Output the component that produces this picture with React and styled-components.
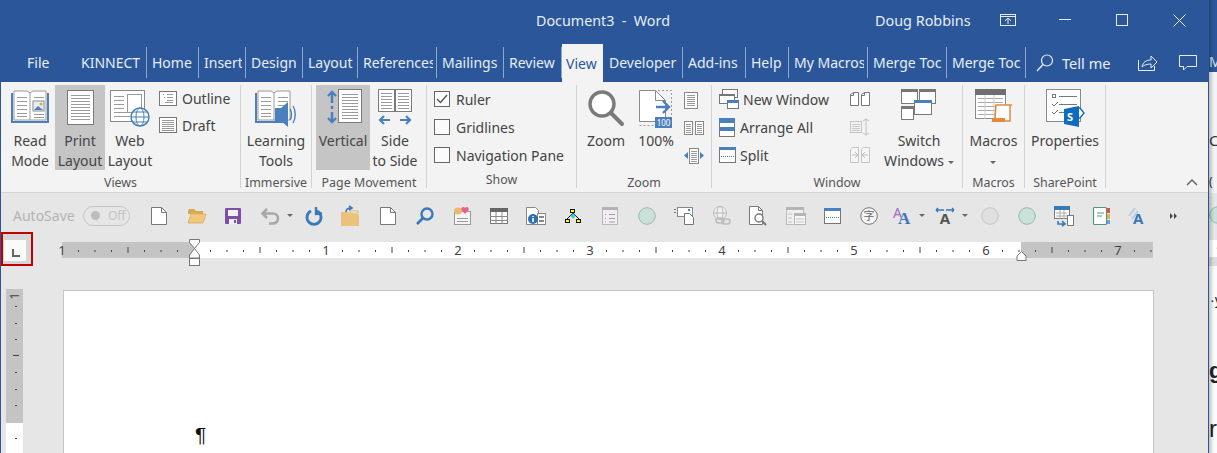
import React from 'react';
import styled, { createGlobalStyle } from 'styled-components';

const Global = createGlobalStyle`
  html, body { margin: 0; padding: 0; background: #e6e6e6; overflow: hidden; }
  * { box-sizing: border-box; }
`;

const Page = styled.div`
  display: flex;
  width: 1217px;
  height: 453px;
  overflow: hidden;
  font-family: "Noto Sans", "Open Sans", sans-serif;
  color: #444;
`;

const Frame = styled.div`
  width: 1209px;
  flex: none;
  display: flex;
  flex-direction: column;
  border-left: 1px solid #2b579a;
  border-right: 1px solid #2b579a;
`;

const Behind = styled.div`
  flex: 1;
  display: flex;
  flex-direction: column;
  overflow: hidden;
  position: relative;
  &::after {
    content: '';
    position: absolute;
    left: 0;
    top: 0;
    bottom: 0;
    width: 5px;
    background: linear-gradient(to right, rgba(0, 0, 0, 0.22), rgba(0, 0, 0, 0));
  }
`;

const BehindBlue = styled.div`
  height: 72px;
  flex: none;
  background: #2b579a;
  color: #dfe6f1;
  padding-top: 52px;
  font-size: 14px;
  line-height: 20px;
`;

const BehindRibbon = styled.div`
  height: 121px;
  flex: none;
  background: #f3f3f3;
  color: #333;
  font-size: 15px;
  line-height: 20px;
  padding-top: 58px;
`;

const BehindParen = styled.div`
  margin-top: 22px;
  font-size: 12px;
`;

const BehindQat = styled.div`
  height: 47px;
  flex: none;
  background: #e6e6e6;
  padding-top: 13px;
  line-height: 0;
`;

const BehindRuler = styled.div`
  height: 17px;
  flex: none;
  background: #fff;
  font-size: 12px;
  line-height: 17px;
  padding-left: 7px;
`;

const BehindBand = styled.div`
  height: 9px;
  flex: none;
  background: #dcdcdc;
`;

const BehindDoc = styled.div`
  flex: 1;
  background: #fbfbfb;
  color: #222;
  padding-top: 26px;
`;

const BehindLine = styled.div`
  font-family: "Liberation Sans", sans-serif;
  font-size: ${p => p.$size}px;
  font-weight: ${p => (p.$bold ? 700 : 400)};
  line-height: ${p => p.$lh}px;
  padding-left: ${p => p.$pl || 0}px;
  margin-top: ${p => p.$mt || 0}px;
  white-space: nowrap;
`;

const TitleBar = styled.div`
  height: 40px;
  background: #2b579a;
  color: #e8edf5;
  display: flex;
  align-items: center;
  font-size: 14px;
`;

const DocTitle = styled.div`
  margin-left: 535px;
  width: 339px;
  font-size: 14.3px;
`;

const UserName = styled.div`
  width: 125px;
  white-space: nowrap;
  font-size: 14.4px;
`;

const WinButton = styled.div`
  display: flex;
  justify-content: center;
  width: ${p => p.$w}px;
  margin-left: ${p => p.$ml || 0}px;
`;

const TabBar = styled.div`
  height: 42px;
  background: #2b579a;
  display: flex;
  align-items: flex-end;
`;

const Tab = styled.div`
  width: ${p => p.$w}px;
  height: ${p => (p.$active ? 38 : 31)}px;
  flex: none;
  margin-bottom: ${p => (p.$active ? 0 : 4)}px;
  display: flex;
  align-items: center;
  white-space: nowrap;
  padding-left: ${p => (p.$active ? 4 : p.$pad ?? 5)}px;
  font-size: 14px;
  color: ${p => (p.$active ? '#2b579a' : '#e8edf5')};
  background: ${p => (p.$active ? '#f3f3f3' : 'transparent')};
  border-right: ${p => (p.$sep ? '1px solid #8fa8cc' : 'none')};
  padding-top: ${p => (p.$active ? 1 : 0)}px;
  margin-right: ${p => p.$mr || 0}px;
`;

const TabLabel = styled.span`
  overflow: hidden;
  flex: 1;
  margin-right: 3px;
`;

const TabIcon = styled.div`
  display: flex;
  align-items: center;
  flex: none;
  height: 31px;
  margin-bottom: 4px;
  margin-left: ${p => p.$ml}px;
`;

const TellMe = styled.div`
  display: flex;
  align-items: center;
  gap: 8px;
  height: 31px;
  margin: 0 0 4px 10px;
  width: 96px;
  flex: none;
  font-size: 14.6px;
  color: #e8edf5;
`;

const Ribbon = styled.div`
  height: 111px;
  background: #f3f3f3;
  display: flex;
  position: relative;
  border-bottom: 1px solid #d4d4d4;
`;

const Group = styled.div`
  width: ${p => p.$w}px;
  flex: none;
  display: flex;
  flex-direction: column;
  padding-top: 3px;
  margin: 3px 0 4px;
  border-right: 1px solid #d2d2d2;
`;

const GroupBody = styled.div`
  height: 85px;
  margin-top: -3px;
  display: flex;
  padding-left: ${p => p.$pl || 0}px;
`;

const GroupLabel = styled.div`
  text-align: center;
  font-size: 12.4px;
  line-height: 16px;
  margin-top: 5px;
  color: #555;
  white-space: nowrap;
`;

const BigButton = styled.div`
  width: ${p => p.$w}px;
  height: 85px;
  flex: none;
  display: flex;
  flex-direction: column;
  align-items: center;
  background: ${p => (p.$on ? '#c5c5c5' : 'transparent')};
  margin-left: ${p => p.$ml || 0}px;
`;

const BigIcon = styled.div`
  height: 46px;
  padding-top: 4px;
  display: flex;
  justify-content: center;
  flex: none;
`;

const BigText = styled.div`
  font-size: 14px;
  line-height: 20px;
  text-align: center;
  white-space: nowrap;
  color: #444;
`;

const Caret = styled.span`
  display: inline-block;
  width: 0;
  height: 0;
  border-left: 3px solid transparent;
  border-right: 3px solid transparent;
  border-top: 3px solid #666;
  margin-left: ${p => p.$ml ?? 4}px;
  vertical-align: middle;
`;

const SmallCol = styled.div`
  display: flex;
  flex-direction: column;
  gap: ${p => p.$gap ?? 4}px;
  padding-top: ${p => p.$pt ?? 3}px;
  margin-left: ${p => p.$ml || 0}px;
  width: ${p => (p.$w ? `${p.$w}px` : 'auto')};
  flex: none;
`;

const SmallRow = styled.div`
  display: flex;
  align-items: center;
  gap: ${p => p.$gap ?? 5}px;
  height: 24px;
  font-size: 14px;
  white-space: nowrap;
  color: #444;
`;

const CheckBox = styled.div`
  width: 16px;
  height: 16px;
  border: 1px solid #666;
  background: #fbfbfb;
  display: flex;
  align-items: center;
  justify-content: center;
`;

const Chevron = styled.div`
  position: absolute;
  left: 1185px;
  top: 97px;
  line-height: 0;
`;

const Qat = styled.div`
  height: 45px;
  background: #e6e6e6;
  display: flex;
  align-items: center;
  padding-left: 12px;
`;

const AutoSave = styled.div`
  font-size: 14px;
  color: #b4b4b4;
  width: 70px;
  flex: none;
`;

const Toggle = styled.div`
  width: 47px;
  height: 20px;
  border: 1px solid #c6c6c6;
  border-radius: 10px;
  display: flex;
  align-items: center;
  padding-left: 7px;
  gap: 8px;
  font-size: 12px;
  color: #c4c4c4;
  flex: none;
`;

const ToggleDot = styled.span`
  width: 9px;
  height: 9px;
  border-radius: 50%;
  background: #bdbdbd;
`;

const QatSlot = styled.div`
  width: 20px;
  margin-left: ${p => p.$ml}px;
  flex: none;
  display: flex;
  justify-content: center;
  align-items: center;
  line-height: 0;
`;

const RulerRow = styled.div`
  height: 50px;
  background: #e6e6e6;
  display: flex;
  align-items: flex-start;
  margin-top: -6px;
  flex: none;
`;

const TabStop = styled.div`
  width: 32px;
  height: 34px;
  border: 2px solid #c00000;
  flex: none;
  padding: 6px 5px 3px 1px;
  display: flex;
  background: #d6d6d6;
`;

const TabStopInner = styled.div`
  flex: 1;
  background: #fafafa;
  display: flex;
  align-items: flex-end;
  padding: 0 0 4px 8px;
`;

const HRuler = styled.div`
  margin: 10px 0 0 29px;
  width: 1091px;
  height: 16px;
  display: flex;
  position: relative;
`;

const Seg = styled.div`
  width: ${p => p.$w}px;
  background: ${p => (p.$gray ? '#c4c4c4' : '#fff')};
  flex: none;
`;

const RulerArt = styled.svg`
  position: absolute;
  left: 0;
  top: -6px;
  overflow: visible;
`;

const Workspace = styled.div`
  flex: 1;
  background: #e6e6e6;
  display: flex;
  min-height: 0;
  overflow: hidden;
  padding-top: 7px;
`;

const VRuler = styled.div`
  width: 17px;
  margin-left: 5px;
  flex: none;
  display: flex;
  flex-direction: column;
  position: relative;
`;

const VSeg = styled.div`
  height: ${p => p.$h}px;
  flex: ${p => (p.$grow ? 1 : 'none')};
  background: ${p => (p.$gray ? '#c4c4c4' : '#fff')};
`;

const VRulerArt = styled.svg`
  position: absolute;
  left: 0;
  top: 0;
`;

const PageSheet = styled.div`
  width: 1091px;
  margin: 1px 0 0 40px;
  height: 200px;
  flex: none;
  background: #fff;
  border: 1px solid #c4c4c4;
  padding: 132px 0 0 131px;
`;

const Pilcrow = styled.div`
  font-family: "Liberation Sans", sans-serif;
  font-size: 21px;
  line-height: 24px;
  color: #111;
`;

const IconSvg = styled.svg`
  flex: none;
  overflow: visible;
`;

const Svg = ({ w, h, children }) => (
  <IconSvg width={w} height={h} viewBox={`0 0 ${w} ${h}`} fill="none">{children}</IconSvg>
);

const lines = (x1, x2, ys, c = '#9a9a9a') =>
  ys.map(y => <path key={`${x1}-${y}`} d={`M${x1} ${y}.5H${x2}`} stroke={c} />);

const ReadIcon = () => (
  <Svg w={38} h={36}>
    <path d="M1 4v29h36V4" stroke="#4a80bd" strokeWidth="2" />
    <path d="M3 2l13 0 3 2 3-2 13 0v29H3z" fill="#fff" stroke="#9a9a9a" />
    <path d="M19 4v27" stroke="#9a9a9a" />
    {lines(6, 16, [8, 12, 16, 20, 24, 27])}
    {lines(23, 33, [8, 25, 28])}
    <rect x="22" y="12" width="11" height="10" fill="#e8eef6" stroke="#8a8a8a" />
    <circle cx="30" cy="15" r="1.5" fill="#e8a33c" />
    <path d="M23 21l4-4 5 4z" fill="#4a80bd" />
  </Svg>
);

const PageIcon = () => (
  <Svg w={30} h={38}>
    <rect x="2.5" y="1.5" width="26" height="34" fill="#fff" stroke="#7a7a7a" />
    {lines(6, 25, [6, 9, 12, 15, 18, 21, 24, 27, 30])}
  </Svg>
);

const WebIcon = () => (
  <Svg w={42} h={38}>
    <rect x="1.5" y="1.5" width="34" height="31" fill="#fff" stroke="#8a8a8a" />
    <rect x="18.5" y="5.5" width="14" height="18" fill="#fff" stroke="#9a9a9a" />
    {lines(5, 15, [7, 11, 15, 19])}
    {lines(5, 21, [23, 27])}
    <circle cx="31" cy="28" r="9" fill="#fff" stroke="#4a80bd" strokeWidth="1.5" />
    <ellipse cx="31" cy="28" rx="4" ry="9" stroke="#4a80bd" />
    <path d="M22 28h18M24 23h14M24 33h14" stroke="#4a80bd" />
  </Svg>
);

const OutlineIcon = () => (
  <Svg w={18} h={15}>
    <rect x="0.5" y="0.5" width="17" height="14" fill="#fff" stroke="#777" />
    <path d="M4 3.5h1M5 6.5h1M8 3.5h6M8 6.5h6M8 9.5h6M6 11.5h8" stroke="#999" />
  </Svg>
);

const DraftIcon = () => (
  <Svg w={18} h={16}>
    <rect x="0.5" y="0.5" width="17" height="15" fill="#fff" stroke="#777" />
    {lines(3, 15, [3, 5, 7, 9, 11, 13], '#999')}
  </Svg>
);

const LearnIcon = () => (
  <Svg w={42} h={38}>
    <path d="M1 4v29h28" stroke="#4a80bd" strokeWidth="2" />
    <path d="M3 2l13 0 3 2 3-2 13 0v29H3z" fill="#fff" stroke="#9a9a9a" />
    <path d="M19 4v27" stroke="#9a9a9a" />
    {lines(6, 16, [8, 12, 16, 20, 24, 27])}
    {lines(23, 33, [8, 12, 16])}
    <path d="M20 19h6l7-6v25l-7-6h-6z" fill="#4a80bd" />
    <path d="M35 20c2 3 2 8 0 11M38 17c3 5 3 12 0 17" stroke="#4a80bd" strokeWidth="1.4" />
  </Svg>
);

const VerticalIcon = () => (
  <Svg w={38} h={36}>
    <path d="M8 3v11M8 17v3M8 23v10M4 7l4-4 4 4M4 29l4 4 4-4" stroke="#4a80bd" strokeWidth="2.4" />
    <rect x="14.5" y="0.5" width="23" height="33" fill="#fff" stroke="#7a7a7a" />
    {lines(18, 34, [5, 8, 11, 14, 17, 20, 23, 26, 29], '#9a9a9a')}
  </Svg>
);

const SideIcon = () => (
  <Svg w={36} h={36}>
    <rect x="1.5" y="0.5" width="16" height="22" fill="#fff" stroke="#7a7a7a" />
    <rect x="18.5" y="0.5" width="16" height="22" fill="#fff" stroke="#7a7a7a" />
    {lines(4, 15, [4, 7, 10, 13, 16, 19])}
    {lines(21, 32, [4, 7, 10, 13, 16, 19])}
    <path d="M3 31h10M7 27l-4 4 4 4M23 31h10M29 27l4 4-4 4" stroke="#4a80bd" strokeWidth="2.2" />
  </Svg>
);

const ZoomIcon = () => (
  <Svg w={38} h={38}>
    <circle cx="15" cy="15" r="12" stroke="#7a7a7a" strokeWidth="3.4" fill="#fff" />
    <path d="M24 24l11 11" stroke="#7a7a7a" strokeWidth="4" strokeLinecap="round" />
  </Svg>
);

const Zoom100Icon = () => (
  <Svg w={36} h={40}>
    <path d="M1.5 1.5h16l10 10v21h-26z" fill="#fff" stroke="#8a8a8a" />
    <path d="M17.5 1.5v10h10" stroke="#8a8a8a" />
    <path d="M20 1.5h13.5v30M1.5 36.5h16" stroke="#9a9a9a" strokeDasharray="2 2" />
    <path d="M18 18h13M25 12l6 6-6 6" stroke="#4a80bd" strokeWidth="2.4" />
    <rect x="17" y="28" width="17" height="11" fill="#4a80bd" />
    <text x="25.5" y="37" fontSize="8" fontFamily="Noto Sans" fill="#fff" textAnchor="middle">100</text>
  </Svg>
);

const OnePage = () => (
  <Svg w={14} h={17}>
    <rect x="0.5" y="0.5" width="13" height="16" fill="#fff" stroke="#888" />
    {lines(3, 11, [3, 5, 7, 9, 11, 13])}
  </Svg>
);

const TwoPage = () => (
  <Svg w={20} h={14}>
    <rect x="0.5" y="0.5" width="8" height="13" fill="#fff" stroke="#888" />
    <rect x="11.5" y="0.5" width="8" height="13" fill="#fff" stroke="#888" />
    {lines(2, 7, [3, 5, 7, 9, 11])}
    {lines(13, 18, [3, 5, 7, 9, 11])}
  </Svg>
);

const WidthPage = () => (
  <Svg w={20} h={16}>
    <rect x="5.5" y="0.5" width="9" height="15" fill="#fff" stroke="#888" />
    {lines(7, 13, [3, 5, 7, 9, 11, 13])}
    <path d="M4 4v7L0 7.5zM16 4v7l4-3.5z" fill="#4a80bd" />
  </Svg>
);

const NewWindowIcon = () => (
  <Svg w={20} h={20}>
    <rect x="3.5" y="0.5" width="15" height="8" fill="#fff" stroke="#777" />
    <rect x="0.5" y="5.5" width="15" height="9" fill="#fff" stroke="#777" />
    <rect x="0" y="5" width="16" height="2" fill="#777" />
    <rect x="8.5" y="11.5" width="11" height="8" fill="#fff" stroke="#777" />
    <rect x="8" y="11" width="12" height="3" fill="#4a80bd" />
  </Svg>
);

const ArrangeIcon = () => (
  <Svg w={16} h={19}>
    <rect x="0.5" y="0.5" width="15" height="18" fill="#fff" stroke="#777" />
    <rect x="0" y="0" width="16" height="5" fill="#4a80bd" />
    <rect x="0" y="9" width="16" height="4" fill="#4a80bd" />
  </Svg>
);

const SplitIcon = () => (
  <Svg w={17} h={16}>
    <rect x="0.5" y="0.5" width="16" height="15" fill="#fff" stroke="#777" />
    <rect x="0" y="0" width="17" height="3" fill="#4a80bd" />
    <path d="M2 9.5h13" stroke="#4a80bd" strokeDasharray="1 1" />
  </Svg>
);

const SyncA = () => (
  <Svg w={20} h={14}>
    <path d="M.5 2.5l3-2h5v13h-8zM11.5 2.5l3-2h5v13h-8z" fill="#fff" stroke="#777" />
    <path d="M3.5.5v3h-3M14.500.5v3h-3" stroke="#777" />
  </Svg>
);

const SyncB = () => (
  <Svg w={20} h={18}>
    <rect x="0.5" y="3.5" width="11" height="11" fill="#f3f3f3" stroke="#c4c4c4" />
    {lines(2, 10, [6, 8, 10, 12], '#c8c8c8')}
    <path d="M16 1v16M13 3l3-2 3 2M13 15l3 2 3-2" stroke="#c0c0c0" />
  </Svg>
);

const SyncC = () => (
  <Svg w={20} h={16}>
    <path d="M.5 2.5l2-2h6v15h-8zM11.5 2.5l2-2h6v15h-8z" fill="#f6f6f6" stroke="#c4c4c4" />
    <path d="M2 8h5M5 5l3 3-3 3M18 8h-5M15 5l-3 3 3 3" stroke="#bcbcbc" />
  </Svg>
);

const SwitchIcon = () => (
  <Svg w={36} h={32}>
    <rect x="0.5" y="0.5" width="16" height="14" fill="#fff" stroke="#7a7a7a" />
    <rect x="18.5" y="0.5" width="16" height="14" fill="#fff" stroke="#7a7a7a" />
    <rect x="0.5" y="17.5" width="12" height="13" fill="#fff" stroke="#7a7a7a" />
    <rect x="0" y="0" width="17" height="3" fill="#777" />
    <rect x="18" y="0" width="17" height="3" fill="#777" />
    <rect x="0" y="17" width="13" height="3" fill="#777" />
    <rect x="13.5" y="11.5" width="17" height="14" fill="#fff" stroke="#7a7a7a" />
    <rect x="13" y="11" width="18" height="3" fill="#4a80bd" />
  </Svg>
);

const MacrosIcon = () => (
  <Svg w={38} h={34}>
    <rect x="0.5" y="0.5" width="30" height="29" fill="#fff" stroke="#8a8a8a" />
    <rect x="0" y="0" width="31" height="6" fill="#6f6f6f" />
    {lines(3, 28, [9, 13, 17, 21, 25], '#aaa')}
    <path d="M10 6v24M19 6v24" stroke="#ccc" />
    <path d="M21 16h15l-1 2v14H18l2-2z" fill="#fff" stroke="#e08a3c" strokeWidth="1.5" />
    <rect x="17" y="29" width="13" height="4" fill="#e08a3c" />
  </Svg>
);

const PropsIcon = () => (
  <Svg w={38} h={38}>
    <rect x="0.5" y="0.5" width="34" height="32" fill="#fff" stroke="#8a8a8a" />
    <rect x="6.5" y="5.5" width="3" height="3" stroke="#777" />
    <path d="M13 7.5h18M13 15.5h18M13 23.5h5M6 15l2 2 4-4M6 23l2 2 4-4" stroke="#777" />
    <path d="M32 19h2l4 5-4 5h-2" stroke="#0f6cbd" fill="#fff" strokeWidth="1.4" />
    <path d="M18 20l15-3v21l-15-3z" fill="#0f6cbd" />
    <text x="21" y="32" fontSize="11" fontWeight="700" fontFamily="Noto Sans" fill="#fff">S</text>
  </Svg>
);

const Qdoc = () => (
  <Svg w={16} h={18}>
    <path d="M.5.5h10l5 5v12H.5z" fill="#fff" stroke="#777" />
    <path d="M10.500.5v5h5" stroke="#777" />
  </Svg>
);

const Qopen = () => (
  <Svg w={19} h={15}>
    <path d="M1 3l1-2h5l2 2h7v3H1z" fill="#d9a94f" />
    <path d="M4 6h15l-3 9H1z" fill="#f0c77f" stroke="#dfb369" />
  </Svg>
);

const Qsave = () => (
  <Svg w={16} h={16}>
    <rect width="16" height="16" rx="1" fill="#7d4fa6" />
    <rect x="3" y="2" width="10" height="6" fill="#f0f0f0" />
    <rect x="4" y="11" width="8" height="5" fill="#f0f0f0" />
    <rect x="9" y="12" width="2" height="3" fill="#7d4fa6" />
  </Svg>
);

const Qundo = () => (
  <Svg w={19} h={16}>
    <path d="M6 1L1.500 5.500 6 10M2 5.500h10a5 5 0 0 1 0 10H8" stroke="#a8a8a8" strokeWidth="2.6" />
  </Svg>
);

const Qredo = () => (
  <Svg w={18} h={18}>
    <path d="M6 4a7 7 0 1 0 6 0" stroke="#3b78b8" strokeWidth="2.8" />
    <path d="M11 0v7l6-.5" stroke="#3b78b8" strokeWidth="2.4" />
  </Svg>
);

const Qfolder = () => (
  <Svg w={20} h={20}>
    <path d="M1 6h7l2 2h9v12H1z" fill="#eac27c" />
    <path d="M10 7h8V5h-8z" fill="#fff" stroke="#d8b067" />
    <path d="M6 6c0-3 2-4 5-4M9 0l3 2-3 2" stroke="#3b78b8" strokeWidth="1.6" />
  </Svg>
);

const Qmag = () => (
  <Svg w={18} h={18}>
    <circle cx="11" cy="7" r="5.5" stroke="#3b78b8" strokeWidth="2.4" />
    <path d="M7 11l-6 6" stroke="#3b78b8" strokeWidth="2.6" />
  </Svg>
);

const Qlabels = () => (
  <Svg w={18} h={18}>
    <rect x="1.5" y="4.5" width="16" height="13" fill="#f4f4f4" stroke="#999" />
    {lines(4, 15, [11, 14])}
    <ellipse cx="5" cy="4" rx="4" ry="3.500" fill="#e8b96b" />
    <path d="M12 7L8.500 3a2 2 0 0 1 3.500-2 2 2 0 0 1 3.500 2z" fill="#e9618a" />
  </Svg>
);

const Qtable = () => (
  <Svg w={18} h={16}>
    <rect x="0.5" y="0.5" width="17" height="15" fill="#fff" stroke="#777" />
    <rect width="18" height="4" fill="#666" />
    <path d="M6 4v12M12 4v12M0 8.500h18M0 12.500h18" stroke="#888" />
  </Svg>
);

const Qinfo = () => (
  <Svg w={20} h={18}>
    <path d="M.5.5h9l3 3v14H.5z" fill="#fff" stroke="#888" />
    <rect x="11.5" y="6.5" width="8" height="11" fill="#fff" stroke="#888" />
    <path d="M13 10h5M13 14h5" stroke="#888" strokeWidth="2" />
    <circle cx="7" cy="12" r="5" fill="#2f6fb3" />
    <path d="M7 11v4M7 9v1" stroke="#fff" strokeWidth="1.6" />
  </Svg>
);

const Qorg = () => (
  <Svg w={16} h={14}>
    <path d="M8 4L2 10M8 4l6 6" stroke="#111" />
    <rect x="5.5" y="0.5" width="4" height="3" fill="#ff0" stroke="#111" />
    <rect x="0.5" y="10.5" width="4" height="3" fill="#ff0" stroke="#111" />
    <rect x="11.5" y="10.5" width="4" height="3" fill="#ff0" stroke="#111" />
    <rect x="6" y="5" width="4" height="4" fill="#39c9d6" transform="rotate(45 8 7)" />
  </Svg>
);

const Qform = () => (
  <Svg w={16} h={18}>
    <rect x="0.5" y="0.5" width="15" height="17" fill="#f0eef0" stroke="#bcb4bc" />
    <rect width="16" height="3" fill="#b8b0b8" />
    <path d="M3 7.500h1M3 11.500h1M3 15h1M7 7.500h6M7 11.500h6M7 15h6" stroke="#a89ca8" />
  </Svg>
);

const Qcircle = ({ fill = '#cbe0d8', stroke = '#8fbfa9' }) => (
  <Svg w={18} h={18}>
    <circle cx="9" cy="9" r="8.3" fill={fill} stroke={stroke} />
  </Svg>
);

const Qmail = () => (
  <Svg w={20} h={18}>
    <path d="M0 2.500h2M0 5.500h2" stroke="#777" />
    <rect x="3.5" y="0.5" width="15" height="9" fill="#fff" stroke="#888" />
    <rect x="14" y="2" width="2" height="2" fill="#4a80bd" />
    <path d="M10.500 6.500h5l4 4v7h-9z" fill="#fff" stroke="#777" />
  </Svg>
);

const Qweb = () => (
  <Svg w={19} h={19}>
    <circle cx="8" cy="7" r="6.5" stroke="#bcbcbc" fill="#efefef" />
    <ellipse cx="8" cy="7" rx="3" ry="6.5" stroke="#bcbcbc" />
    <path d="M1 7h14" stroke="#bcbcbc" />
    <rect x="4" y="12" width="8" height="5" rx="2.5" stroke="#bcbcbc" strokeWidth="1.6" />
    <rect x="10" y="13" width="8" height="5" rx="2.5" stroke="#bcbcbc" strokeWidth="1.6" />
  </Svg>
);

const Qpreview = () => (
  <Svg w={18} h={20}>
    <path d="M.5.5h9l4 4v14h-13z" fill="#fff" stroke="#777" />
    <path d="M9.500.5v4h4" stroke="#777" />
    <circle cx="10" cy="12" r="4" fill="#fff" stroke="#777" strokeWidth="1.4" />
    <path d="M13 15l4 4" stroke="#777" strokeWidth="2" />
  </Svg>
);

const Qgrid = () => (
  <Svg w={20} h={18}>
    <rect x="0.5" y="0.5" width="17" height="17" fill="#f0f0f0" stroke="#bcbcbc" />
    <rect width="18" height="3" fill="#b4b4b4" />
    <rect x="8.5" y="6.5" width="11" height="11" fill="#f6f6f6" stroke="#b4b4b4" />
    <rect x="8" y="6" width="12" height="3" fill="#b4b4b4" />
    <path d="M2 7h4M2 11h4M2 15h4M10 12h8M10 15h8" stroke="#c4c4c4" />
  </Svg>
);

const Qchar = () => (
  <Svg w={18} h={18}>
    <circle cx="9" cy="9" r="8.3" fill="#f4f4f4" stroke="#777" />
    <text x="9" y="13" fontSize="11" textAnchor="middle" fill="#666" fontFamily="Noto Sans CJK SC">字</text>
  </Svg>
);

const QfontA = () => (
  <Svg w={18} h={17}>
    <text x="0" y="11" fontSize="14" fontFamily="Noto Sans" fill="#a06fc4">A</text>
    <text x="5" y="17" fontSize="17" fontWeight="700" fontFamily="Liberation Serif" fill="#3b78b8">A</text>
  </Svg>
);

const QspaceA = () => (
  <Svg w={20} h={17}>
    <path d="M1 3h8M1 3l2-2M1 3l2 2M19 3h-8M19 3l-2-2M19 3l-2 2" stroke="#3b78b8" strokeWidth="1.4" />
    <text x="10" y="17" fontSize="15" fontWeight="700" textAnchor="middle" fontFamily="Noto Sans" fill="#555">A</text>
  </Svg>
);

const Qsync = () => (
  <Svg w={20} h={20}>
    <rect x="0.5" y="0.5" width="15" height="12" fill="#fff" stroke="#777" />
    <rect width="16" height="4" fill="#3b78b8" />
    <path d="M2 7h11M2 10h11M6 4v9M10 4v9" stroke="#aaa" />
    <rect x="13.5" y="9.5" width="6" height="10" fill="#fff" stroke="#777" />
    <path d="M4 15v3h6M8 15l3 3-3 2" stroke="#3b78b8" strokeWidth="1.6" />
  </Svg>
);

const Qnote = () => (
  <Svg w={18} h={18}>
    <rect x="1.5" y="0.5" width="13" height="17" rx="1" fill="#fff" stroke="#4d9a84" strokeWidth="1.2" />
    <path d="M5 6h7M5 9h5" stroke="#4d9a84" />
    <rect x="15" y="1" width="3" height="5" fill="#d9573a" />
    <rect x="15" y="7" width="3" height="5" fill="#e8b04a" />
    <rect x="15" y="13" width="3" height="4" fill="#6aa5d8" />
  </Svg>
);

const Qstyle = () => (
  <Svg w={18} h={18}>
    <path d="M1 9l6-8M4 12l6-8" stroke="#b4cbe4" strokeWidth="2" />
    <text x="5" y="17" fontSize="15" fontWeight="700" fontFamily="Noto Sans" fill="#3b78b8">A</text>
  </Svg>
);

const Qmore = () => (
  <Svg w={7} h={6}>
    <path d="M0 0l3 3-3 3zM4 0l3 3-3 3z" fill="#444" />
  </Svg>
);

// [center x in the window, icon]
const qatItems = [
  [159, <Qdoc />],
  [196, <Qopen />],
  [233, <Qsave />],
  [270, <Qundo />],
  [290, <Caret $ml={0} />],
  [314, <Qredo />],
  [350, <Qfolder />],
  [388, <Qdoc />],
  [425, <Qmag />],
  [462, <Qlabels />],
  [499, <Qtable />],
  [536, <Qinfo />],
  [573, <Qorg />],
  [610, <Qform />],
  [647, <Qcircle />],
  [684, <Qmail />],
  [721, <Qweb />],
  [758, <Qpreview />],
  [796, <Qgrid />],
  [832, <SplitIcon />],
  [869, <Qchar />],
  [902, <QfontA />],
  [922, <Caret $ml={0} />],
  [945, <QspaceA />],
  [965, <Caret $ml={0} />],
  [990, <Qcircle fill="#e0e0e0" stroke="#c4c4c4" />],
  [1027, <Qcircle />],
  [1064, <Qsync />],
  [1101, <Qnote />],
  [1137, <Qstyle />],
  [1173, <Qmore />],
];

const tabs = [
  ['File', 76, false, 26],
  ['KINNECT', 70, true, 4],
  ['Home', 52, true],
  ['Insert', 47, true],
  ['Design', 57, true],
  ['Layout', 55, true],
  ['References', 79, true],
  ['Mailings', 67, true],
  ['Review', 58, true],
];

const tabs2 = [
  ['Developer', 79, true],
  ['Add-ins', 63, true],
  ['Help', 43, true],
  ['My Macros', 79, true],
  ['Merge Toc', 79, true],
  ['Merge Toc', 79, true],
];

const horizontalTicks = () => {
  const out = [];
  for (let i = 0; i <= 66; i++) {
    if (i % 8 === 0) continue;
    const long = i % 4 === 0;
    out.push(
      <path
        key={i}
        d={`M${i * 16.5} ${long ? 11 : 14}V${long ? 17 : 16}`}
        stroke="#444"
      />
    );
  }
  return out;
};

const rulerNumbers = [
  [0, '1'], [264, '1'], [396, '2'], [528, '3'], [660, '4'], [792, '5'], [924, '6'], [1056, '7'],
];

const verticalTicks = [17, 34, 50, 83, 100, 116, 149, 165];

const App = () => {
  let right = 130;
  const qatSlots = qatItems.map(([center, icon], i) => {
    const ml = center - 10 - right;
    right = center + 10;
    return <QatSlot key={i} $ml={ml}>{icon}</QatSlot>;
  });

  return (
    <Page>
      <Global />
      <Frame>
        <TitleBar>
          <DocTitle>Document3&nbsp; -&nbsp; Word</DocTitle>
          <UserName>Doug Robbins</UserName>
          <WinButton $w={16}>
            <Svg w={16} h={13}>
              <rect x="0.5" y="0.5" width="15" height="11" stroke="#e8edf5" />
              <path d="M0 2.500h16M8 10V4M5 7l3-3 3 3" stroke="#e8edf5" />
            </Svg>
          </WinButton>
          <WinButton $w={12} $ml={43}>
            <Svg w={12} h={2}><path d="M0 .5h12" stroke="#e8edf5" /></Svg>
          </WinButton>
          <WinButton $w={12} $ml={45}>
            <Svg w={12} h={12}><rect x="0.5" y="0.5" width="11" height="11" stroke="#e8edf5" /></Svg>
          </WinButton>
          <WinButton $w={13} $ml={45}>
            <Svg w={13} h={13}><path d="M.5.5l12 12M12.500.5l-12 12" stroke="#e8edf5" /></Svg>
          </WinButton>
        </TitleBar>
        <TabBar>
          {tabs.map(([t, w, sep, pad], i) => (
            <Tab key={i} $w={w} $sep={sep} $pad={pad}><TabLabel>{t}</TabLabel></Tab>
          ))}
          <Tab $active $w={41} $mr={1}>View</Tab>
          {tabs2.map(([t, w, sep], i) => (
            <Tab key={i} $w={w} $sep={sep}><TabLabel>{t}</TabLabel></Tab>
          ))}
          <TellMe>
            <Svg w={18} h={18}>
              <circle cx="11" cy="6.500" r="5.500" stroke="#e8edf5" strokeWidth="1.2" />
              <path d="M7 10.500L1 17" stroke="#e8edf5" strokeWidth="1.4" />
            </Svg>
            Tell me
          </TellMe>
          <TabIcon $ml={6}>
            <Svg w={20} h={17}>
              <path d="M.5 6v10.500h16V12" stroke="#e8edf5" />
              <path d="M4 13c1-5 4-7 9-7V2l6 6-6 6v-4c-4 0-7 1-9 3z" stroke="#e8edf5" />
            </Svg>
          </TabIcon>
          <TabIcon $ml={21}>
            <Svg w={18} h={16}>
              <path d="M.5.5h17v11H8L4.500 15v-3.500h-4z" stroke="#e8edf5" />
            </Svg>
          </TabIcon>
        </TabBar>
        <Ribbon>
          <Group $w={240}>
            <GroupBody $pl={4}>
              <BigButton $w={50}>
                <BigIcon><ReadIcon /></BigIcon>
                <BigText>Read<br />Mode</BigText>
              </BigButton>
              <BigButton $w={50} $on>
                <BigIcon><PageIcon /></BigIcon>
                <BigText>Print<br />Layout</BigText>
              </BigButton>
              <BigButton $w={50}>
                <BigIcon><WebIcon /></BigIcon>
                <BigText>Web<br />Layout</BigText>
              </BigButton>
              <SmallCol $ml={4} $pt={1} $gap={3}>
                <SmallRow><OutlineIcon />Outline</SmallRow>
                <SmallRow><DraftIcon />Draft</SmallRow>
              </SmallCol>
            </GroupBody>
            <GroupLabel>Views</GroupLabel>
          </Group>
          <Group $w={71}>
            <GroupBody>
              <BigButton $w={70}>
                <BigIcon><LearnIcon /></BigIcon>
                <BigText>Learning<br />Tools</BigText>
              </BigButton>
            </GroupBody>
            <GroupLabel>Immersive</GroupLabel>
          </Group>
          <Group $w={115}>
            <GroupBody $pl={4}>
              <BigButton $w={54} $on>
                <BigIcon><VerticalIcon /></BigIcon>
                <BigText>Vertical</BigText>
              </BigButton>
              <BigButton $w={50}>
                <BigIcon><SideIcon /></BigIcon>
                <BigText>Side<br />to Side</BigText>
              </BigButton>
            </GroupBody>
            <GroupLabel>Page Movement</GroupLabel>
          </Group>
          <Group $w={150}>
            <GroupBody $pl={7}>
              <SmallCol $gap={4} $pt={2}>
                <SmallRow $gap={6}>
                  <CheckBox>
                    <Svg w={12} h={10}><path d="M1 5l3.500 3.500L11 1" stroke="#555" strokeWidth="1.4" /></Svg>
                  </CheckBox>
                  Ruler
                </SmallRow>
                <SmallRow $gap={6}><CheckBox />Gridlines</SmallRow>
                <SmallRow $gap={6}><CheckBox />Navigation Pane</SmallRow>
              </SmallCol>
            </GroupBody>
            <GroupLabel>Show</GroupLabel>
          </Group>
          <Group $w={135}>
            <GroupBody $pl={4}>
              <BigButton $w={50}>
                <BigIcon><ZoomIcon /></BigIcon>
                <BigText>Zoom</BigText>
              </BigButton>
              <BigButton $w={50}>
                <BigIcon><Zoom100Icon /></BigIcon>
                <BigText>100%</BigText>
              </BigButton>
              <SmallCol $ml={3} $pt={3} $gap={4}>
                <SmallRow><OnePage /></SmallRow>
                <SmallRow><TwoPage /></SmallRow>
                <SmallRow><WidthPage /></SmallRow>
              </SmallCol>
            </GroupBody>
            <GroupLabel>Zoom</GroupLabel>
          </Group>
          <Group $w={251}>
            <GroupBody $pl={7}>
              <SmallCol $w={131} $pt={2}>
                <SmallRow $gap={4}><NewWindowIcon />New Window</SmallRow>
                <SmallRow $gap={5}><ArrangeIcon />Arrange All</SmallRow>
                <SmallRow $gap={4}><SplitIcon />Split</SmallRow>
              </SmallCol>
              <SmallCol $pt={2} $w={25}>
                <SmallRow><SyncA /></SmallRow>
                <SmallRow><SyncB /></SmallRow>
                <SmallRow><SyncC /></SmallRow>
              </SmallCol>
              <BigButton $w={60} $ml={14}>
                <BigIcon><SwitchIcon /></BigIcon>
                <BigText>Switch<br />Windows<Caret /></BigText>
              </BigButton>
            </GroupBody>
            <GroupLabel>Window</GroupLabel>
          </Group>
          <Group $w={62}>
            <GroupBody>
              <BigButton $w={61}>
                <BigIcon><MacrosIcon /></BigIcon>
                <BigText>Macros<br /><Caret $ml={0} /></BigText>
              </BigButton>
            </GroupBody>
            <GroupLabel>Macros</GroupLabel>
          </Group>
          <Group $w={81}>
            <GroupBody>
              <BigButton $w={80}>
                <BigIcon><PropsIcon /></BigIcon>
                <BigText>Properties</BigText>
              </BigButton>
            </GroupBody>
            <GroupLabel>SharePoint</GroupLabel>
          </Group>
          <Chevron>
            <Svg w={12} h={7}><path d="M1 6l5-5 5 5" stroke="#666" strokeWidth="1.5" /></Svg>
          </Chevron>
        </Ribbon>
        <Qat>
          <AutoSave>AutoSave</AutoSave>
          <Toggle><ToggleDot />Off</Toggle>
          {qatSlots}
        </Qat>
        <RulerRow>
          <TabStop>
            <TabStopInner>
              <Svg w={8} h={8}><path d="M1 0v7H8" stroke="#666" strokeWidth="2" /></Svg>
            </TabStopInner>
          </TabStop>
          <HRuler>
            <Seg $gray $w={132} />
            <Seg $w={827} />
            <Seg $gray $w={132} />
            <RulerArt width="1091" height="30">
              {horizontalTicks()}
              {rulerNumbers.map(([x, n]) => (
                <text key={x} x={x} y="19" fontSize="13" fontFamily="Noto Sans" fill="#444" textAnchor="middle">{n}</text>
              ))}
              <path d="M127.5 3.500h10v3l-5 6-5-6zM127.500 22v-3l5-6.500 5 6.500v3z" fill="#fff" stroke="#777" />
              <rect x="127.5" y="22.5" width="10" height="7" fill="#fff" stroke="#777" />
              <path d="M955 24.500v-4.500l4.500-4.500 4.500 4.500v4.500z" fill="#fff" stroke="#777" />
            </RulerArt>
          </HRuler>
        </RulerRow>
        <Workspace>
          <VRuler>
            <VSeg $gray $h={134} />
            <VSeg $grow />
            <VRulerArt width="17" height="164">
              <text x="-6" y="13" fontSize="12" fontFamily="Noto Sans" fill="#444" transform="rotate(-90 0 0) translate(-1 0)" textAnchor="middle">1</text>
              {verticalTicks.map(y => (
                <path key={y} d={y === 67 ? '' : `M9 ${y}.5h2`} stroke="#444" />
              ))}
              <path d="M7 66.500h6" stroke="#444" />
            </VRulerArt>
          </VRuler>
          <PageSheet>
            <Pilcrow>¶</Pilcrow>
          </PageSheet>
        </Workspace>
      </Frame>
      <Behind>
        <BehindBlue>M</BehindBlue>
        <BehindRibbon>
          C
          <BehindParen>(</BehindParen>
        </BehindRibbon>
        <BehindQat><Qcircle /></BehindQat>
        <BehindRuler>·</BehindRuler>
        <BehindBand />
        <BehindDoc>
          <BehindLine $size={14} $lh={16} $pl={1}>·y</BehindLine>
          <BehindLine $size={22} $lh={26} $mt={50} $bold>g</BehindLine>
          <BehindLine $size={24} $lh={26} $mt={32}>rt</BehindLine>
        </BehindDoc>
      </Behind>
    </Page>
  );
};

export default App;
